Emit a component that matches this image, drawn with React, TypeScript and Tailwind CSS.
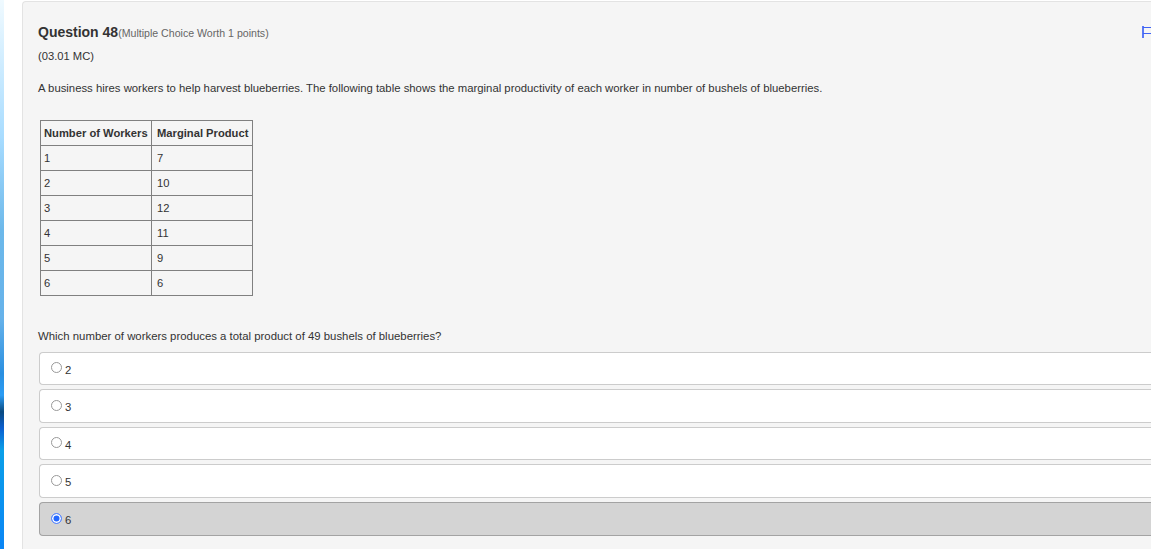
const rows = [
  ["1", "7"],
  ["2", "10"],
  ["3", "12"],
  ["4", "11"],
  ["5", "9"],
  ["6", "6"],
];

const choices = [
  { label: "2", top: "mt-0", h: "h-[33px]" },
  { label: "3", top: "mt-1", h: "h-[34px]" },
  { label: "4", top: "mt-[4px]", h: "h-[33px]" },
  { label: "5", top: "mt-1", h: "h-[34px]" },
  { label: "6", top: "mt-1", h: "h-[34px]", selected: true },
];

function FlagIcon() {
  return (
    <svg width="12" height="12" viewBox="0 0 12 12" className="block" fill="none">
      <path d="M1 0V12" stroke="#3f63f5" strokeWidth="1.7" />
      <path d="M1 1.5H11M1 7.5H11" stroke="#3f63f5" strokeWidth="1.2" />
    </svg>
  );
}

export default function App() {
  return (
    <div className="flex h-[549px] w-[1151px] overflow-hidden bg-white font-['Liberation_Sans',Arial,sans-serif] text-[#333333]">
      <div className="w-1 shrink-0 bg-[linear-gradient(to_bottom,#f0faff_0%,#a8dcff_25%,#6cb8ea_42%,#66b2ea_58%,#2a8fe0_68%,#2a9cf5_72%,#0a4a80_75%,#0a5fd0_78%,#0a9fe8_82%,#0a85f5_100%)]" />
      <div className="ml-[18px] mt-px h-[560px] min-w-0 flex-1 rounded-l border border-r-0 border-[#e3e3e3] bg-[#f5f5f5] pl-[15px] pt-[20px]">
        <div className="relative">
          <h2 className="text-[14px] font-bold leading-5">
            Question 48<span className="text-[10.6px] font-normal text-[#666666]">(Multiple Choice Worth 1 points)</span>
          </h2>
          <span className="absolute left-[1104px] top-[4px]">
            <FlagIcon />
          </span>
        </div>
        <p className="mt-[3px] text-[11.2px] leading-5">(03.01 MC)</p>
        <p className="mt-3 whitespace-nowrap text-[11.33px] leading-5">
          A business hires workers to help harvest blueberries. The following table shows the marginal productivity of each worker in number of bushels of blueberries.
        </p>
        <table className="ml-[2px] mt-[22px] w-[212px] table-fixed border-collapse text-[11.2px] leading-[15px]">
          <thead>
            <tr className="h-[25px]">
              <th className="w-[111px] whitespace-nowrap border border-[#808080] px-[3px] text-left font-bold">Number of Workers</th>
              <th className="w-[101px] whitespace-nowrap border border-[#808080] px-[5px] text-left font-bold">Marginal Product</th>
            </tr>
          </thead>
          <tbody>
            {rows.map(([workers, product]) => (
              <tr key={workers} className="h-[25px]">
                <td className="border border-[#808080] px-[3px]">{workers}</td>
                <td className="border border-[#808080] px-[5px]">{product}</td>
              </tr>
            ))}
          </tbody>
        </table>
        <p className="mt-[30px] text-[11.39px] leading-5">Which number of workers produces a total product of 49 bushels of blueberries?</p>
        <div className="ml-px mt-[6px]">
          {choices.map((c) => (
            <label
              key={c.label}
              className={`flex items-center rounded-l border border-r-0 pl-[11px] text-[11.33px] ${c.top} ${c.h} ${
                c.selected ? "border-[#a3a3a3] bg-[#d4d4d4]" : "border-[#cccccc] bg-white"
              }`}
            >
              <input
                type="radio"
                name="choice"
                defaultChecked={c.selected}
                className="m-0 -mt-[2px] size-[11px] appearance-none rounded-full border border-[#999999] bg-white checked:border-[#5f8bff] checked:bg-[#2468ff] checked:shadow-[inset_0_0_0_1.5px_#ffffff]"
              />
              <span className="ml-[3px] pt-[3px]">{c.label}</span>
            </label>
          ))}
        </div>
      </div>
    </div>
  );
}
